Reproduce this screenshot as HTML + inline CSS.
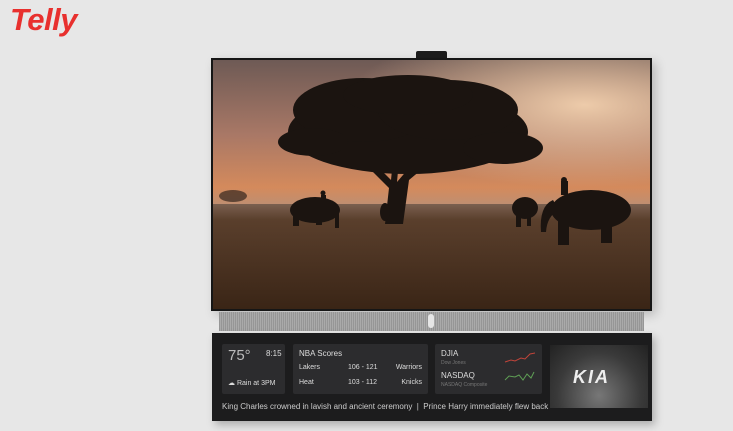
<!DOCTYPE html>
<html><head><style>
body{margin:0;width:733px;height:431px;background:#e7e7e7;position:relative;overflow:hidden;font-family:"Liberation Sans",sans-serif}
.logo{position:absolute;left:10px;top:2px;font-size:31px;font-weight:bold;font-style:italic;color:#e8302e;letter-spacing:-0.5px}
.cam{position:absolute;left:416px;top:51px;width:31px;height:8px;background:#1c1c1c;border-radius:2px 2px 0 0}
.tv{position:absolute;left:211px;top:58px;width:441px;height:253px;background:#161616;box-shadow:4px 4px 10px rgba(0,0,0,.2)}
.tv svg{position:absolute;left:2px;top:2px}
.spk{position:absolute;left:219px;top:312px;width:425px;height:19px;background:repeating-linear-gradient(90deg,#bbb 0 1px,#d4d4d4 1px 2px),#ccc;background-blend-mode:multiply}
.spk i{position:absolute;left:209px;top:2px;width:6px;height:14px;background:#e6e6e6;border-radius:3px}
.panel{position:absolute;left:212px;top:333px;width:440px;height:88px;background:#1c1c1d;box-shadow:3px 4px 8px rgba(0,0,0,.25);color:#ddd}
.card{position:absolute;top:11px;height:50px;background:#2c2c2e;border-radius:2px;font-size:8px}
.t{position:absolute;white-space:nowrap}
.ad{position:absolute;left:338px;top:12px;width:98px;height:63px;background:radial-gradient(ellipse at 50% 80%,#777,#3a3a3a 60%,#222)}
</style></head><body>
<div class="logo">Telly</div>
<div class="cam"></div>
<div class="tv"><svg width="437" height="249" viewBox="0 0 437 249">
<defs>
<linearGradient id="sky" x1="0" y1="0" x2="0" y2="1"><stop offset="0" stop-color="#6e5a55"/><stop offset=".5" stop-color="#a97866"/><stop offset=".85" stop-color="#d48a5c"/><stop offset="1" stop-color="#b89078"/></linearGradient>
<radialGradient id="glow" cx=".85" cy=".3" r=".55"><stop offset="0" stop-color="#f2d0ae" stop-opacity=".95"/><stop offset="1" stop-color="#f0c9a4" stop-opacity="0"/></radialGradient>
<linearGradient id="gr" x1="0" y1="0" x2="0" y2="1"><stop offset="0" stop-color="#7a6050"/><stop offset=".15" stop-color="#5a3f2c"/><stop offset="1" stop-color="#3a2516"/></linearGradient>
</defs>
<rect width="437" height="150" fill="url(#sky)"/>
<rect width="437" height="150" fill="url(#glow)"/>
<rect y="144" width="437" height="105" fill="url(#gr)"/>
<g fill="#1b1410">
<path d="M172 164 L176 128 L160 112 L130 100 L140 98 L168 110 L178 120 L180 100 L186 100 L184 122 L196 108 L215 98 L220 100 L196 120 L190 164 Z"/>
<ellipse cx="195" cy="72" rx="120" ry="42"/>
<ellipse cx="150" cy="50" rx="70" ry="32"/>
<ellipse cx="235" cy="50" rx="70" ry="30"/>
<ellipse cx="195" cy="35" rx="65" ry="20"/>
<ellipse cx="100" cy="82" rx="35" ry="14"/>
<ellipse cx="290" cy="88" rx="40" ry="16"/>
<ellipse cx="102" cy="150" rx="25" ry="13"/>
<rect x="80" y="150" width="6" height="16"/><rect x="103" y="152" width="6" height="13"/><rect x="122" y="148" width="4" height="20"/>
<rect x="108" y="135" width="5" height="8"/><circle cx="110" cy="133" r="2.5"/>
<ellipse cx="378" cy="150" rx="40" ry="20"/>
<path d="M340 140 Q326 146 328 172 L333 172 Q334 156 346 150 Z"/>
<rect x="345" y="155" width="11" height="30"/><rect x="388" y="155" width="11" height="28"/>
<rect x="348" y="121" width="7" height="14"/><circle cx="351" cy="120" r="3"/>
<ellipse cx="312" cy="148" rx="13" ry="11"/><rect x="303" y="150" width="5" height="17"/><rect x="314" y="150" width="4" height="16"/>
<ellipse cx="172" cy="152" rx="5" ry="9"/>
<ellipse cx="20" cy="136" rx="14" ry="6" opacity=".6"/>
</g>
</svg></div>
<div class="spk"><i></i></div>
<div class="panel">
<div class="card" style="left:10px;width:63px">
<div class="t" style="left:6px;top:3px;font-size:15px;color:#bbb">75°</div>
<div class="t" style="left:44px;top:5px">8:15</div>
<div class="t" style="left:6px;top:35px;font-size:7px">☁ Rain at 3PM</div></div>
<div class="card" style="left:81px;width:135px">
<div class="t" style="left:6px;top:5px">NBA Scores</div>
<div class="t" style="left:6px;top:20px;font-size:7px">Lakers</div><div class="t" style="left:55px;top:20px;font-size:7px">106 - 121</div><div class="t" style="right:6px;top:20px;font-size:7px">Warriors</div>
<div class="t" style="left:6px;top:35px;font-size:7px">Heat</div><div class="t" style="left:55px;top:35px;font-size:7px">103 - 112</div><div class="t" style="right:6px;top:35px;font-size:7px">Knicks</div></div>
<div class="card" style="left:223px;width:107px">
<div class="t" style="left:6px;top:5px">DJIA</div><div class="t" style="left:6px;top:16px;font-size:5px;color:#777">Dow Jones</div>
<div class="t" style="left:6px;top:27px">NASDAQ</div><div class="t" style="left:6px;top:38px;font-size:5px;color:#777">NASDAQ Composite</div>
<svg style="position:absolute;left:68px;top:4px" width="36" height="40"><path d="M2 14 L8 12 L12 13 L18 10 L22 11 L27 6 L32 5" stroke="#c0443a" fill="none"/><path d="M2 32 L6 28 L12 29 L16 27 L20 32 L24 26 L28 30 L31 24" stroke="#5f9f55" fill="none"/></svg></div>
<div class="t" style="left:10px;top:69px;font-size:8px;color:#ccc">King Charles crowned in lavish and ancient ceremony &nbsp;|&nbsp; Prince Harry immediately flew back</div>
<div class="ad"><div class="t" style="left:23px;top:22px;font-size:18px;font-weight:bold;font-style:italic;color:#eee;letter-spacing:2px">KIA</div></div>
</div>
</body></html>
